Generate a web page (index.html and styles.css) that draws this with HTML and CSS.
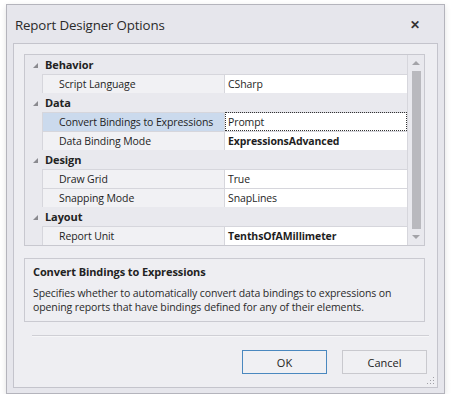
FILE: index.html
```html
<!DOCTYPE html>
<html lang="en">

<head>
    <meta charset="UTF-8">
    <title>Report Designer Options</title>
    <link rel="stylesheet" href="styles.css">
</head>

<body>

    <div class="window">
        <div class="titlebar">
            <span class="title">Report Designer Options</span>
            <span class="close">&#x2715;</span>
        </div>

        <div class="client">
            <div class="grid">
                <div class="rows">
                    <div class="category"><span class="arrow"></span>Behavior</div>
                    <div class="prop">
                        <div class="name">Script Language</div>
                        <div class="value">CSharp</div>
                    </div>

                    <div class="category"><span class="arrow"></span>Data</div>
                    <div class="prop selected">
                        <div class="name">Convert Bindings to Expressions</div>
                        <div class="value focused">Prompt</div>
                    </div>
                    <div class="prop">
                        <div class="name">Data Binding Mode</div>
                        <div class="value bold">ExpressionsAdvanced</div>
                    </div>

                    <div class="category"><span class="arrow"></span>Design</div>
                    <div class="prop">
                        <div class="name">Draw Grid</div>
                        <div class="value">True</div>
                    </div>
                    <div class="prop">
                        <div class="name">Snapping Mode</div>
                        <div class="value">SnapLines</div>
                    </div>

                    <div class="category"><span class="arrow"></span>Layout</div>
                    <div class="prop">
                        <div class="name">Report Unit</div>
                        <div class="value bold">TenthsOfAMillimeter</div>
                    </div>
                </div>

                <div class="scrollbar">
                    <span class="scroll-up"></span>
                    <div class="thumb"></div>
                    <span class="scroll-down"></span>
                </div>
            </div>

            <div class="splitter"><span class="dots"></span></div>

            <div class="description">
                <div class="desc-title">Convert Bindings to Expressions</div>
                <p>Specifies whether to automatically convert data bindings to expressions on
                    opening reports that have bindings defined for any of their elements.</p>
            </div>

            <hr>

            <div class="buttons">
                <button class="btn default">OK</button>
                <button class="btn">Cancel</button>
            </div>

            <span class="grip"></span>
        </div>
    </div>

</body>
</html>
```

FILE: styles.css
```css
body {
    margin: 0;
    background-color: white;
    font-family: "Open Sans", "Noto Sans", Arial, sans-serif;
    font-size: 10.5px;
    letter-spacing: -0.1px;
    color: #1e1e1e;
}

.window {
    margin: 4px 0 0 6px;
    width: 437px;
    height: 388px;
    border: 1px solid #b4b4bc;
    background-color: #e6e6ec;
    display: flex;
    flex-direction: column;
    box-shadow: 0 2px 6px rgba(0, 0, 0, 0.12);
}

.titlebar {
    height: 38px;
    display: flex;
    align-items: center;
    justify-content: space-between;
    padding: 0 24px 0 8px;
}

.title {
    font-size: 13.3px;
    letter-spacing: -0.15px;
    color: #2a2a2a;
    padding-top: 2px;
}

.close {
    font-size: 12px;
    font-weight: bold;
    color: #333;
}

.client {
    position: relative;
    flex: 1;
    margin: 0 6px 5px 6px;
    border: 1px solid #c4c4cc;
    background-color: #eeeef2;
    padding: 10px 12px 0 10px;
}

/* property grid */
.grid {
    display: flex;
    border: 1px solid #c8c8cf;
    background-color: #e9e9ee;
}

.rows {
    flex: 1;
}

.category {
    height: 19px;
    line-height: 19px;
    font-weight: bold;
    font-size: 11px;
    color: #222;
    display: flex;
    align-items: center;
    padding-left: 8px;
}

.arrow {
    width: 0;
    height: 0;
    border-left: 5px solid transparent;
    border-bottom: 5px solid #8a8a8f;
    margin-right: 7px;
    margin-top: 1px;
}

.prop {
    display: flex;
    height: 19px;
    padding-left: 17px;
}

.prop .name,
.prop .value {
    height: 18px;
    line-height: 18px;
    border-top: 1px solid #d6d6dc;
    box-sizing: content-box;
}

.prop .name {
    width: 165px;
    padding-left: 16px;
    background-color: #f1f1f4;
    border-left: 1px solid #d6d6dc;
    border-right: 1px solid #d6d6dc;
    white-space: nowrap;
}

.prop .value {
    flex: 1;
    padding-left: 3px;
    background-color: white;
}

.selected .name {
    background-color: #cbdaed;
}

.focused {
    outline: 1px dotted #333;
    outline-offset: -1px;
}

.bold {
    font-weight: bold;
}

.scrollbar {
    width: 16px;
    display: flex;
    flex-direction: column;
    align-items: center;
    background-color: #e9e9ee;
    border-left: 1px solid #d6d6dc;
}

.scroll-up,
.scroll-down {
    width: 0;
    height: 0;
    border-left: 4px solid transparent;
    border-right: 4px solid transparent;
    margin: 6px 0;
}

.scroll-up {
    border-bottom: 4px solid #a3a3a8;
}

.scroll-down {
    border-top: 4px solid #a3a3a8;
}

.thumb {
    flex: 1;
    width: 9px;
    background-color: #b9b9be;
}

.splitter {
    height: 12px;
    display: flex;
    align-items: center;
    justify-content: center;
}

/* dotted grip of the splitter */
.dots {
    width: 15px;
    height: 4px;
    background-image: radial-gradient(#c2c2c8 0.5px, transparent 0.6px);
    background-size: 3px 2px;
}

.description {
    height: 64px;
    border: 1px solid #cacad1;
    padding: 5px 8px;
    box-sizing: border-box;
}

.desc-title {
    font-weight: bold;
    font-size: 11px;
    color: #222;
}

.description p {
    margin: 7px 0 0;
    line-height: 14px;
    color: #2a2a2a;
}

hr {
    margin: 13px -4px 0 8px;
    border: 0;
    border-top: 1px solid #cfcfd5;
    border-bottom: 1px solid #f6f6f8;
}

.buttons {
    display: flex;
    justify-content: flex-end;
    gap: 15px;
    margin-top: 13px;
    margin-right: -2px;
}

.btn {
    width: 85px;
    height: 24px;
    font-family: inherit;
    font-size: 11px;
    color: #222;
    background-color: #f0f0f3;
    border: 1px solid #c9c9ce;
}

.btn.default {
    border-color: #4a88bf;
}

.grip {
    position: absolute;
    right: 3px;
    bottom: 3px;
    width: 8px;
    height: 8px;
    background-image: radial-gradient(#a0a0a6 0.6px, transparent 0.8px);
    background-size: 3px 3px;
    clip-path: polygon(100% 0, 100% 100%, 0 100%);
}
```
